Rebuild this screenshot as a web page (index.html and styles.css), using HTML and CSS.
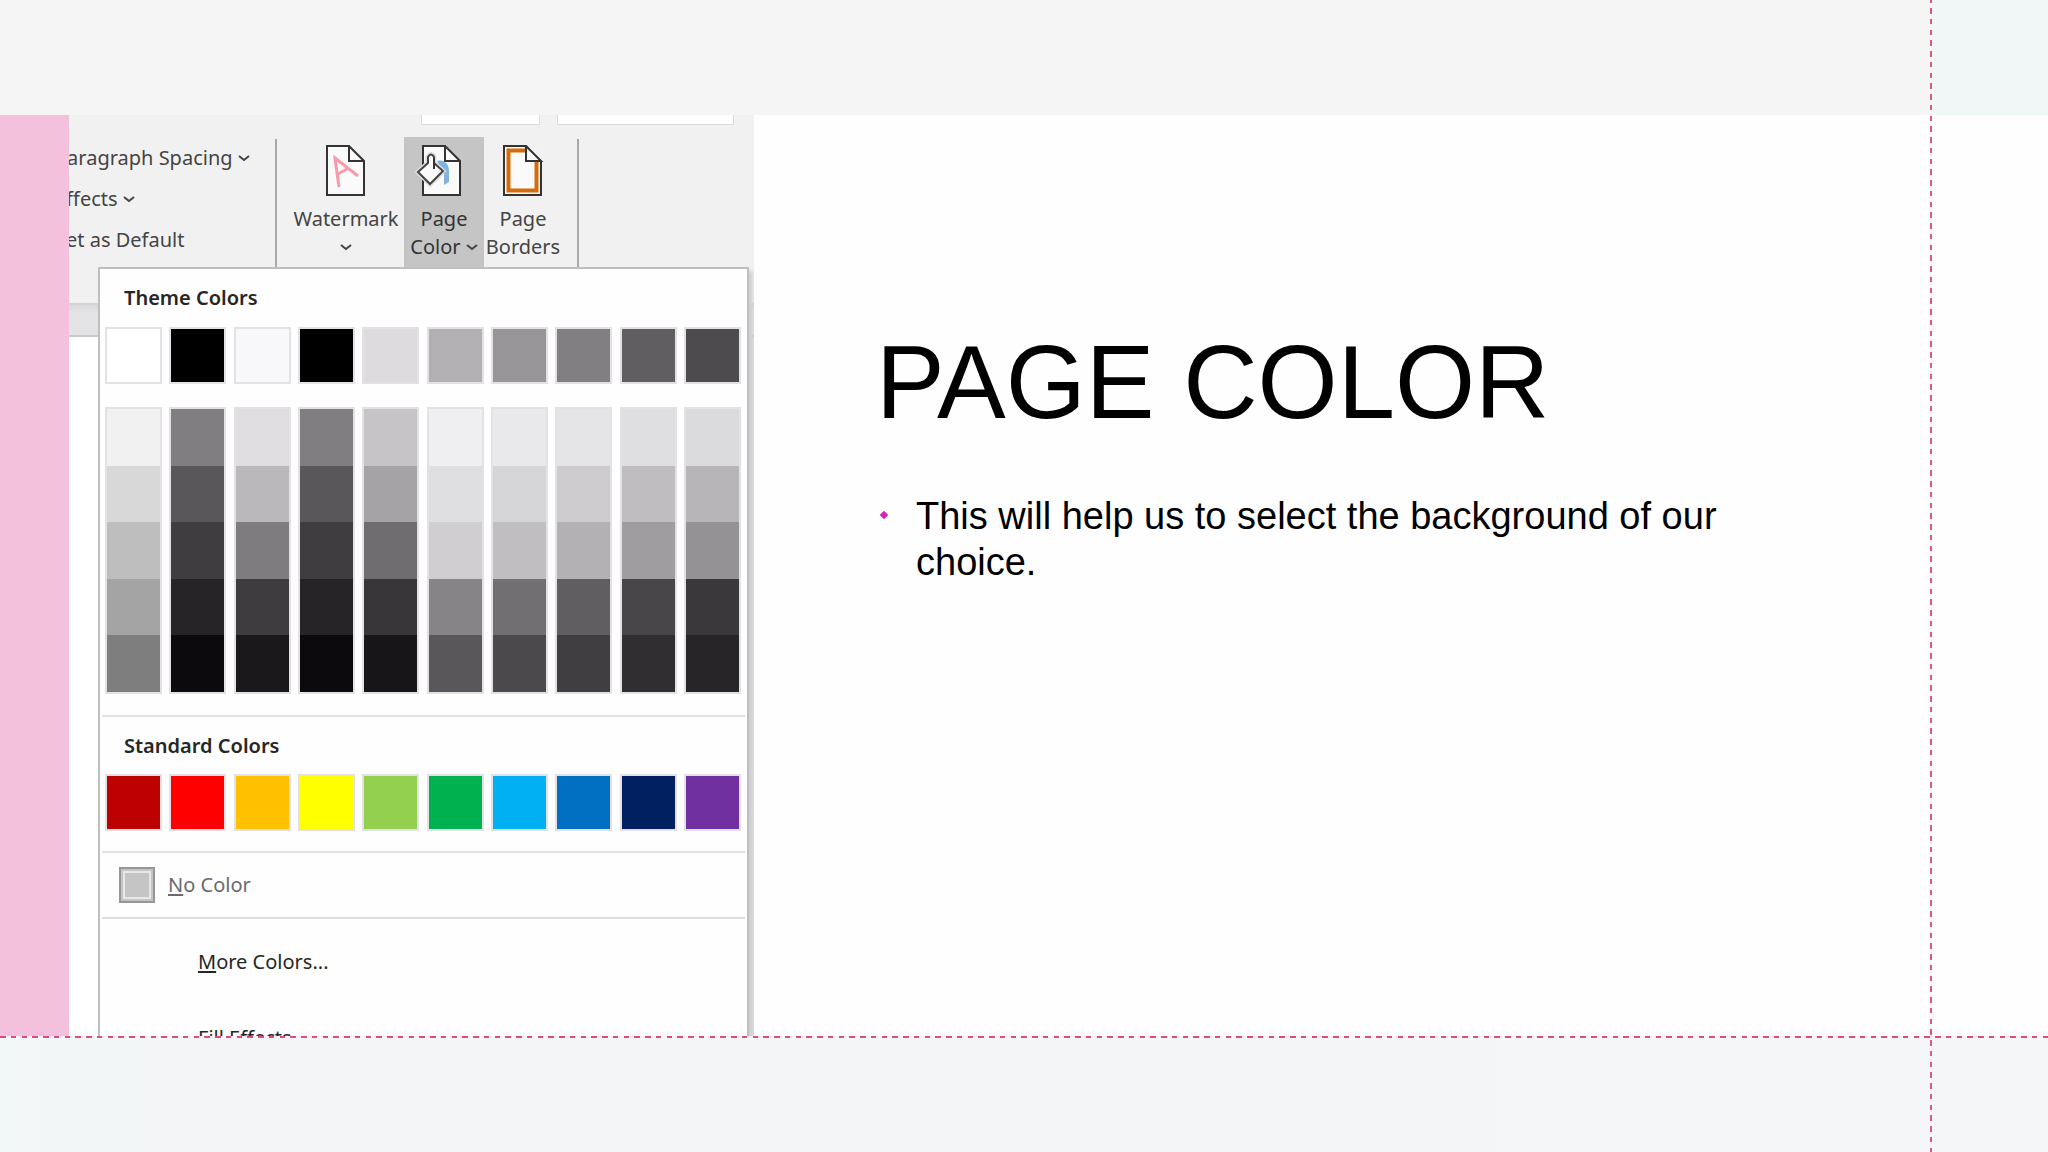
FILE: index.html
```html
<!DOCTYPE html>
<html lang="en">
<head>
<meta charset="utf-8">
<title>Page Color</title>
<link rel="stylesheet" href="styles.css">
</head>
<body>
<div class="slide">
  <header class="band band-top"><div class="band-corner"></div></header>
  <main class="stage">
    <div class="accent"></div>
    <section class="panel" aria-label="Design ribbon">
      <div class="ribbon">
        <div class="gallery"><span class="thumb"></span><span class="thumb thumb-wide"></span></div>
        <div class="groups">
          <div class="doc-group">
            <button class="row-btn">Paragraph Spacing <svg class="chev" viewBox="0 0 12 8"><path d="M1 2l5 4 5-4"/></svg></button>
            <button class="row-btn">Effects <svg class="chev" viewBox="0 0 12 8"><path d="M1 2l5 4 5-4"/></svg></button>
            <button class="row-btn">Set as Default</button>
          </div>
          <div class="bg-group">
            <button class="big-btn watermark">
              <svg class="icon" viewBox="0 0 44 52"><path class="sheet" d="M3 2h22l15 15v34H3z"/><path class="fold" d="M25 2v15h15"/><path class="mark" d="M15 43L11 14l23 18M12 31l11-6"/></svg>
              <span>Watermark</span>
              <svg class="chev" viewBox="0 0 12 8"><path d="M1 2l5 4 5-4"/></svg>
            </button>
            <button class="big-btn color-btn">
              <svg class="icon" viewBox="0 0 44 52"><path class="sheet" d="M3 2h22l15 15v34H3z"/><path class="fold" d="M25 2v15h15"/><path d="M17 17c8-2 12 4 12 10v11l-5 3V26l-5-5z" fill="#7fb4e0"/><path class="halo" d="M-2 28l10-9v-6q3-5 6 0v6l9 8-13 13z"/><path class="bucket" d="M-2 28l10-9v-6q3-5 6 0v6l9 8-13 13z"/><path class="fold" d="M14 14v11"/></svg>
              <span>Page</span>
              <span>Color <svg class="chev" viewBox="0 0 12 8"><path d="M1 2l5 4 5-4"/></svg></span>
            </button>
            <button class="big-btn borders-btn">
              <svg class="icon" viewBox="0 0 44 52"><path class="sheet" d="M3 2h22l15 15v34H3z"/><path d="M7.500 6.500h28v40h-28z" fill="none" stroke="#d66c09" stroke-width="4"/><path d="M25 2l15 15h-15z" fill="#fafafa"/><path d="M25 2h16v15z" fill="#f2f2f2"/><path class="fold" d="M25 2v15h15L25 2"/></svg>
              <span>Page</span>
              <span>Borders</span>
            </button>
          </div>
        </div>
      </div>
      <div class="ruler"></div>
      <div class="document"></div>
      <div class="menu">
        <h2 class="menu-title">Theme Colors</h2>
        <div class="swatches" id="theme"></div>
        <div class="swatches shades" id="shades"></div>
        <h2 class="menu-title ruled">Standard Colors</h2>
        <div class="swatches standard" id="standard"></div>
        <button class="no-color"><span class="chip"></span><span><u>N</u>o Color</span></button>
        <div class="items">
          <button class="item"><u>M</u>ore Colors...</button>
          <button class="item"><u>F</u>ill Effects...</button>
        </div>
      </div>
    </section>
    <article class="copy">
      <h1>PAGE COLOR</h1>
      <ul><li>This will help us to select the background of our choice.</li></ul>
    </article>
    <div class="guide-h"></div>
  </main>
  <footer class="band band-bottom"></footer>
  <div class="guide-v"></div>
</div>
<script src="script.js"></script>
</body>
</html>
```
FILE: styles.css
```css
* { box-sizing: border-box; }
body { margin: 0; background: #fefefe; font-family: "Liberation Sans", Arial, sans-serif; color: #000; }
button { font: inherit; color: inherit; background: none; border: 0; padding: 0; margin: 0; }
h1, h2, ul { margin: 0; padding: 0; font-weight: 400; }
.slide { position: relative; display: grid; grid-template-rows: 115px 1fr 114px; height: 100vh; overflow: hidden; }
.band-top { background: #f5f5f5; display: flex; justify-content: flex-end; }
.band-corner { width: 116px; background: #f1f7f7; }
.band-bottom { background: linear-gradient(90deg, #f2f7f8, #f4f5f7 12%, #f4f6f8); }
.stage { position: relative; display: grid; grid-template-columns: 69px 685px 1fr; min-height: 0; }
.accent { background: #f3c1dc; }

.guide-h, .guide-v { position: absolute; pointer-events: none; }
.guide-h { left: 0; right: 0; bottom: 0; height: 2px; background: repeating-linear-gradient(90deg, #df4a80 0 6px, #fbf2f6 6px 11px, #df4a80 11px 16px, #fbf2f6 16px 22px, #df4a80 22px 27px, #fbf2f6 27px 32px, #df4a80 32px 38px, #fbf2f6 38px 43px); }
.guide-v { top: 0; bottom: 0; right: 116px; width: 2px; background: repeating-linear-gradient(180deg, #d9598a 0 3px, #fbf2f6 3px 8px, #d9598a 8px 14px, #fbf2f6 14px 19px, #d9598a 19px 24px, #fbf2f6 24px 30px, #d9598a 30px 35px, #fbf2f6 35px 40px, #d9598a 40px 43px); }

.panel { position: relative; display: flex; flex-direction: column; overflow: hidden; background: #fff; font-family: "Noto Sans", "Open Sans", sans-serif; font-size: 20px; line-height: 28px; color: #444; }
.ribbon { height: 190px; background: #f2f1f2; border-bottom: 2px solid #d3d2d4; flex: none; }
.ruler { height: 32px; background: linear-gradient(#d9d9db, #e4e4e6 8px); border-bottom: 2px solid #c8c8ca; flex: none; }
.document { flex: 1; background: linear-gradient(90deg, #fff 50%, #dddce0 50%); }
.gallery { display: flex; gap: 17px; padding-left: 352px; }
.thumb { width: 119px; height: 10px; background: #fff; border: 1px solid #dcdcdc; border-top: 0; }
.thumb-wide { width: 177px; }
.groups { display: flex; margin-top: 12px; height: 130px; }
.doc-group { width: 208px; display: flex; flex-direction: column; align-items: flex-start; padding-top: 5px; border-right: 2px solid #a9a9ab; margin-top: 2px; overflow: hidden; }
.row-btn { height: 41px; margin-left: -14px; white-space: nowrap; text-align: left; line-height: 28px; padding-bottom: 13px; }
.bg-group { display: flex; width: 302px; border-right: 2px solid #a9a9ab; margin-top: 2px; }
.big-btn { display: flex; flex-direction: column; align-items: center; padding-top: 7px; margin-top: -2px; white-space: nowrap; }
.icon { width: 44px; height: 52px; margin-bottom: 9px; flex: none; overflow: visible; }
.watermark { width: 104px; margin-left: 17px; }
.watermark .chev { margin-top: 10px; }
.color-btn { width: 80px; margin-left: 6px; background: #c5c5c5; color: #333; }
.color-btn .icon { margin-right: 4px; }
.borders-btn { width: 76px; margin-left: 1px; }
.chev { width: 12px; height: 8px; fill: none; stroke: #444; stroke-width: 2; vertical-align: 3px; }
.sheet { fill: #fafafa; stroke: #333; stroke-width: 2; }
.fold { fill: none; stroke: #333; stroke-width: 2; }
.mark { fill: none; stroke: #f99aa8; stroke-width: 3; }
.halo { fill: none; stroke: #ddd; stroke-width: 5; }
.bucket { fill: #fafafa; stroke: #444; stroke-width: 2; }

.menu { position: absolute; left: 29px; top: 152px; width: 651px; padding: 0 2px; background: #fefefe; border: 2px solid #bfbec1; color: #262626; box-shadow: 4px 4px 4px #d0d0d2; }
.menu-title { height: 58px; padding: 15px 22px 0; font-size: 20px; font-weight: 600; line-height: 28px; }
.swatches { display: flex; justify-content: space-between; padding: 0 4px 0 3px; }
.swatch { width: 57px; height: 57px; border: 2px solid #e3e1e5; flex: none; }
.shades { margin: 23px 0 21px; }
.column { display: grid; grid-template-rows: repeat(5, 1fr); width: 57px; height: 287px; border: 2px solid #e3e1e5; }
.ruled { border-top: 2px solid #e1e0e4; height: 59px; }
.standard { padding-bottom: 20px; }
.no-color { display: flex; align-items: center; gap: 13px; width: 100%; height: 68px; padding-left: 17px; border-top: 2px solid #e1e0e4; border-bottom: 2px solid #dddce0; color: #6b6870; }
.chip { width: 36px; height: 36px; border: 2px solid #969696; background: #c5c5c5; box-shadow: inset 0 0 0 2px #c5c5c5, inset 0 0 0 4px #e8e8e8; }
.items { display: flex; flex-direction: column; padding-top: 5px; }
.item { height: 76px; padding-left: 96px; text-align: left; }
u { text-underline-offset: 2px; text-decoration-thickness: 2px; }

.copy { padding: 216px 320px 0 122px; }
h1 { font-size: 103px; line-height: 104px; }
ul { list-style: none; margin-top: 58px; font-size: 38px; line-height: 46px; }
li { display: flex; gap: 29px; }
li::before { content: ""; flex: none; width: 6px; height: 6px; margin: 19px 0 0 5px; background: #d222ba; transform: rotate(45deg); }
```
FILE: script.js
```js
const theme = ["#ffffff", "#000000", "#f8f7fa", "#000000", "#dddbde", "#b2b0b3", "#979598", "#827f82", "#605e61", "#4d4b4e"];
const standard = ["#bd0000", "#ff0000", "#ffc000", "#ffff00", "#94d050", "#00b150", "#00b0f3", "#006fc1", "#002060", "#7030a0"];
const shades = [
  ["#f2f1f2", "#d9d8d9", "#bfbebf", "#a5a4a5", "#7f7e7f"],
  ["#807e81", "#595759", "#3f3d40", "#262427", "#0c0a0d"],
  ["#dfdde0", "#bab8bb", "#7e7c7f", "#3e3c3f", "#1a181b"],
  ["#807e81", "#595759", "#3f3d40", "#262427", "#0c0a0d"],
  ["#c6c4c7", "#a5a3a6", "#6f6d70", "#383639", "#171518"],
  ["#efeef1", "#dfdee1", "#d0ced1", "#868487", "#595759"],
  ["#e9e8eb", "#d5d4d7", "#c0bec1", "#716f72", "#4b494c"],
  ["#e5e4e7", "#cdcbce", "#b3b1b4", "#605e61", "#403e41"],
  ["#dfdee0", "#bfbdc0", "#9f9da0", "#484649", "#302e31"],
  ["#dbdadc", "#b7b5b8", "#949295", "#3a383b", "#272528"]
];

function button(color, className) {
  const b = document.createElement("button");
  b.className = className;
  b.style.background = color;
  b.setAttribute("aria-label", color);
  return b;
}

theme.forEach(c => document.getElementById("theme").append(button(c, "swatch")));
standard.forEach(c => document.getElementById("standard").append(button(c, "swatch")));
shades.forEach(list => {
  const column = document.createElement("div");
  column.className = "column";
  list.forEach(c => column.append(button(c, "shade")));
  document.getElementById("shades").append(column);
});
```
